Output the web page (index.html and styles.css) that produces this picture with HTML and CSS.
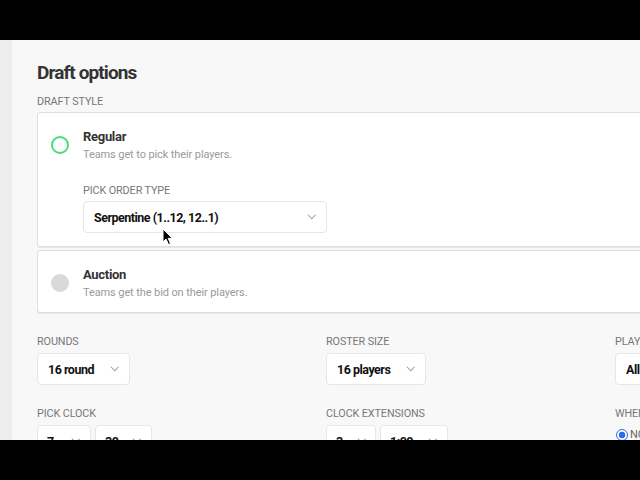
FILE: index.html
```html
<!DOCTYPE html>
<html>
<head>
<meta charset="utf-8">
<link rel="stylesheet" href="styles.css">
</head>
<body>
<div class="bar"></div>
<div class="viewport">
  <div class="sidebar"></div>
  <div class="main">
    <div class="content">
      <h1 class="title">Draft options</h1>
      <div class="label label-style">DRAFT STYLE</div>
      <div class="card card-regular">
        <div class="radio-row">
          <span class="radio radio-on"></span>
          <div class="radio-text">
            <div class="opt-name">Regular</div>
            <div class="opt-desc">Teams get to pick their players.</div>
            <div class="label label-pick">PICK ORDER TYPE</div>
            <div class="select select-wide">
              <span class="select-value">Serpentine (1..12, 12..1)</span>
              <span class="chev"></span>
            </div>
          </div>
        </div>
      </div>
      <div class="card card-auction">
        <div class="radio-row">
          <span class="radio radio-off"></span>
          <div class="radio-text">
            <div class="opt-name">Auction</div>
            <div class="opt-desc">Teams get the bid on their players.</div>
          </div>
        </div>
      </div>

      <div class="grid">
        <div class="field">
          <div class="label">ROUNDS</div>
          <div class="controls">
            <div class="select s-rounds"><span class="select-value">16 round</span><span class="chev"></span></div>
          </div>
        </div>
        <div class="field">
          <div class="label">ROSTER SIZE</div>
          <div class="controls">
            <div class="select s-roster"><span class="select-value">16 players</span><span class="chev"></span></div>
          </div>
        </div>
        <div class="field">
          <div class="label">PLAYER POOL</div>
          <div class="controls">
            <div class="select"><span class="select-value">All players</span><span class="chev"></span></div>
          </div>
        </div>
        <div class="field">
          <div class="label">PICK CLOCK</div>
          <div class="controls">
            <div class="select s-min"><span class="select-value">7</span><span class="chev"></span></div>
            <div class="select s-sec"><span class="select-value">30</span><span class="chev"></span></div>
          </div>
        </div>
        <div class="field">
          <div class="label">CLOCK EXTENSIONS</div>
          <div class="controls">
            <div class="select s-ext"><span class="select-value">3</span><span class="chev"></span></div>
            <div class="select s-ext2"><span class="select-value">1:00</span><span class="chev"></span></div>
          </div>
        </div>
        <div class="field">
          <div class="label">WHEN TIME EXPIRES</div>
          <div class="radio-line">
            <span class="mini-radio"></span><span class="mini-text">NO AUTOPICK</span>
          </div>
        </div>
      </div>
    </div>
  </div>
</div>
<div class="bar"></div>
<svg class="cursor" width="12" height="18" viewBox="0 0 12 18">
  <path d="M1 1 L1 14 L4 11 L6.5 16.5 L8.5 15.6 L6.2 10.3 L10.2 10.3 Z" fill="#000" stroke="#fff" stroke-width="1"/>
</svg>
</body>
</html>
```
FILE: styles.css
```css
html, body {
  margin: 0;
  padding: 0;
}
body {
  background: #000;
  width: 640px;
  height: 480px;
  overflow: hidden;
  font-family: Roboto, "Liberation Sans", Arial, sans-serif;
  position: relative;
}
.bar {
  height: 40px;
  background: #000;
}
.viewport {
  height: 400px;
  display: flex;
  overflow: hidden;
}
.sidebar {
  width: 12px;
  flex: none;
  background: #ededed;
}
.main {
  flex: 1;
  background: #f8f8f8;
  overflow: hidden;
  padding-left: 25px;
}
.content {
  width: 880px;
  padding-top: 21px;
}
.title {
  margin: 0;
  font-size: 19px;
  line-height: 24px;
  font-weight: 700;
  letter-spacing: -0.9px;
  color: #333;
}
.label {
  font-size: 10.8px;
  line-height: 14px;
  color: #777;
  letter-spacing: -0.1px;
}
.label-style {
  margin-top: 10px;
}
.card {
  margin-top: 3px;
  background: #fff;
  border: 1px solid #dedede;
  border-radius: 3px;
  box-shadow: 0 1px 0 #e6e6e6;
  padding: 16px 0 12px 13px;
}
.card-regular {
  padding-bottom: 13px;
}
.radio-row {
  display: flex;
  align-items: flex-start;
  gap: 14px;
}
.radio {
  flex: none;
  width: 18px;
  height: 18px;
  border-radius: 50%;
  box-sizing: border-box;
  margin-top: 7px;
}
.radio-on {
  border: 2.5px solid #45df72;
}
.radio-off {
  background: #d9d9d9;
}
.opt-name {
  font-size: 13px;
  line-height: 16px;
  font-weight: 700;
  letter-spacing: -0.3px;
  color: #333;
}
.opt-desc {
  margin-top: 3px;
  font-size: 11px;
  line-height: 14px;
  letter-spacing: -0.1px;
  color: #9a9a9a;
}
.label-pick {
  margin-top: 22px;
}
.select {
  box-sizing: border-box;
  height: 32px;
  background: #fff;
  border: 1px solid #e3e6ec;
  border-radius: 4px;
  display: flex;
  align-items: center;
  justify-content: space-between;
  padding: 0 12px 0 10px;
  gap: 16px;
}
.label-pick + .select {
  margin-top: 3px;
}
.select-wide {
  width: 244px;
}
.select-value {
  font-size: 12.5px;
  font-weight: 700;
  letter-spacing: -0.5px;
  color: #111;
  white-space: nowrap;
}
.chev {
  width: 4.5px;
  height: 4.5px;
  border-right: 1.3px solid #8c96a6;
  border-bottom: 1.3px solid #8c96a6;
  transform: rotate(45deg);
  margin-top: -4px;
  flex: none;
}
.grid {
  margin-top: 22px;
  display: grid;
  grid-template-columns: 289px 289px 289px;
  row-gap: 22px;
}
.controls {
  display: flex;
  gap: 4px;
  margin-top: 4px;
}
.s-rounds { width: 93px; }
.s-roster { width: 100px; }
.s-min { width: 54px; padding-left: 9px; }
.s-sec { width: 57px; padding-left: 9px; }
.s-ext { width: 50px; padding-left: 9px; }
.s-ext2 { width: 68px; padding-left: 9px; }
.radio-line {
  margin-top: 7px;
  display: flex;
  align-items: center;
  gap: 2px;
  padding-left: 1px;
}
.mini-radio {
  width: 12px;
  height: 12px;
  box-sizing: border-box;
  border-radius: 50%;
  border: 1.5px solid #2d6fe6;
  background: radial-gradient(circle, #2d6fe6 0 3.2px, #fff 3.6px);
  flex: none;
}
.mini-text {
  font-size: 11px;
  color: #666;
}
.cursor {
  position: absolute;
  left: 162px;
  top: 228px;
}
```
